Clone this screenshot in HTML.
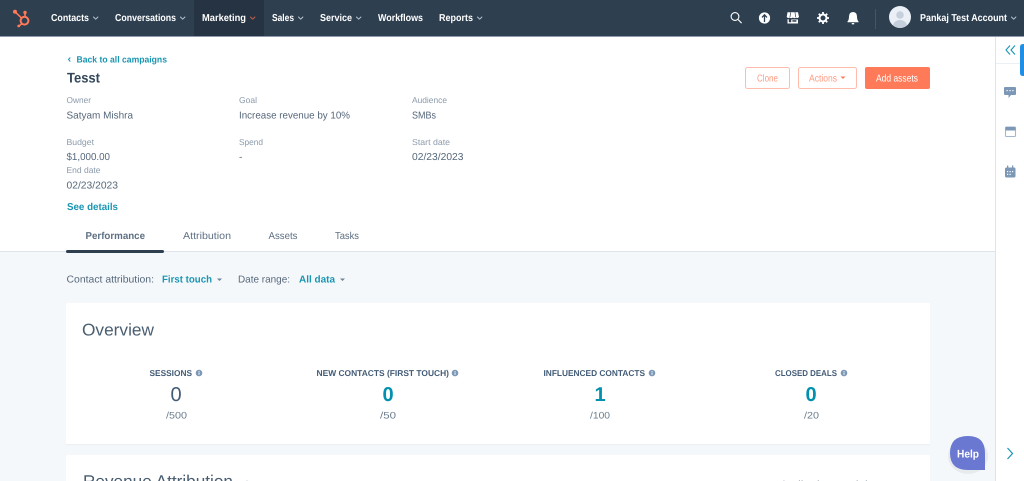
<!DOCTYPE html>
<html lang="en"><head><meta charset="utf-8"><title>Campaign</title>
<style>
html,body{margin:0;padding:0;width:1024px;height:481px;overflow:hidden;background:#fff}
svg{display:block;font-family:"Liberation Sans",sans-serif}
text{text-rendering:geometricPrecision}
.t{filter:blur(.35px)}
.nav{font-size:10px;font-weight:700;fill:#fff}
.lab{font-size:8.5px;fill:#8b9aab}
.val{font-size:10px;fill:#55677a}
.lnk{font-size:10px;font-weight:700;fill:#1a96b2}
.tab{font-size:10px;fill:#5d6f82}
.met{font-size:8.5px;font-weight:700;fill:#425b76}
.big{font-size:20px;text-anchor:middle}
.sub{font-size:9.5px;fill:#6b7c8d}
.chev{fill:none;stroke:#b9c4d0;stroke-width:1;stroke-linecap:round;stroke-linejoin:round}
</style></head><body>
<svg width="1024" height="481" viewBox="0 0 1024 481" xmlns="http://www.w3.org/2000/svg">
<rect width="1024" height="481" fill="#fff"/>
<!-- page bg -->
<rect x="0" y="252" width="995" height="229" fill="#f5f8fa"/>
<rect x="0" y="251" width="995" height="1" fill="#dfe3eb"/>
<!-- top nav -->
<rect width="1024" height="36" fill="#2e3f50"/>
<rect y="36" width="1024" height="1" fill="#8f9baa"/>
<rect x="194" width="70" height="36" fill="#253342"/>
<!-- logo -->
<g fill="none" stroke="#ff7a59" stroke-linecap="round">
<circle cx="24.5" cy="20.7" r="3.9" stroke-width="2"/>
<path d="M15.5 12.2 L21.3 17.8" stroke-width="1.5"/>
<path d="M25 13 V16.5" stroke-width="1.6"/>
<path d="M21.5 24 L19 26" stroke-width="1.5"/>
</g>
<g fill="#ff7a59"><circle cx="15" cy="11.8" r="2"/><circle cx="25" cy="12.5" r="1.7"/><circle cx="18.7" cy="26" r="1.4"/></g>
<g class="t">
<text class="nav" x="51" y="21" textLength="38" lengthAdjust="spacingAndGlyphs">Contacts</text>
<text class="nav" x="115" y="21" textLength="61" lengthAdjust="spacingAndGlyphs">Conversations</text>
<text class="nav" x="202" y="21" textLength="44" lengthAdjust="spacingAndGlyphs">Marketing</text>
<text class="nav" x="272" y="21" textLength="22" lengthAdjust="spacingAndGlyphs">Sales</text>
<text class="nav" x="320" y="21" textLength="32" lengthAdjust="spacingAndGlyphs">Service</text>
<text class="nav" x="378" y="21" textLength="45" lengthAdjust="spacingAndGlyphs">Workflows</text>
<text class="nav" x="439" y="21" textLength="34" lengthAdjust="spacingAndGlyphs">Reports</text>
<text class="nav" x="920" y="21" textLength="87" lengthAdjust="spacingAndGlyphs">Pankaj Test Account</text>
</g>
<g class="chev">
<path d="M93.5 17 l2.2 2.2 l2.2 -2.2"/><path d="M180.5 17 l2.2 2.2 l2.2 -2.2"/>
<path d="M250.5 17 l2.2 2.2 l2.2 -2.2" stroke="#c9604a" style="stroke:#c9604a"/>
<path d="M298.5 17 l2.2 2.2 l2.2 -2.2"/><path d="M356.5 17 l2.2 2.2 l2.2 -2.2"/>
<path d="M477.5 17 l2.2 2.2 l2.2 -2.2"/><path d="M1011.5 17 l2.2 2.2 l2.2 -2.2"/>
</g>
<!-- search -->
<g fill="none" stroke="#fff" stroke-width="1.1" stroke-linecap="round"><circle cx="735" cy="16.5" r="3.9"/><path d="M738 19.5 L741.3 22.8"/></g>
<!-- upgrade -->
<circle cx="764.5" cy="18" r="5.6" fill="#fff"/>
<path d="M764.5 22 V15.2 M762 17.4 L764.5 14.8 L767 17.4" fill="none" stroke="#2e3f50" stroke-width="1.3"/>
<!-- marketplace -->
<g fill="#fff"><path d="M787.5 12.3 H798 L799 17 Q797.5 18.8 796 17.5 Q794.5 18.8 793 17.5 Q791.3 18.8 789.8 17.5 Q788 18.8 786.7 17 Z"/>
<path d="M787.5 19.2 H788.8 V22.2 H791.2 V19.5 H798 V23.5 H787.5 Z"/></g>
<path d="M790.6 12.3 L790 17 M795 12.3 L795.6 17" stroke="#2e3f50" stroke-width=".7"/>
<rect x="792.4" y="20.2" width="4" height="1.5" fill="#2e3f50"/>
<!-- gear -->
<g fill="none" stroke="#fff"><circle cx="823" cy="18" r="3.5" stroke-width="2"/>
<path d="M823 12 V14 M823 22 V24 M817 18 H819 M827 18 H829 M818.8 13.8 L820.2 15.2 M825.8 20.8 L827.2 22.2 M818.8 22.2 L820.2 20.8 M825.8 15.2 L827.2 13.8" stroke-width="1.8"/></g>
<!-- bell -->
<path d="M853 12 Q857 12.3 857 16.5 Q857 20 858.5 21.5 V22.3 H847.5 V21.5 Q849 20 849 16.5 Q849 12.3 853 12 Z" fill="#fff"/>
<rect x="851.7" y="23" width="2.6" height="1.4" rx=".7" fill="#fff"/>
<rect x="875" y="9" width="1" height="20" fill="#43566a"/>
<!-- avatar -->
<clipPath id="av"><circle cx="900" cy="17" r="11"/></clipPath>
<circle cx="900" cy="17" r="11" fill="#eaf0f6"/>
<g clip-path="url(#av)" fill="#c5d0dc"><circle cx="900" cy="15" r="3.8"/><ellipse cx="900" cy="26" rx="7" ry="6"/></g>

<!-- header content -->
<g class="t">
<path d="M70.3 57.5 L68.5 59.5 L70.3 61.5" fill="none" stroke="#1a96b2" stroke-width="1"/>
<text class="lnk" x="76.5" y="62.5" style="font-size:9px" textLength="90.5" lengthAdjust="spacingAndGlyphs">Back to all campaigns</text>
<text x="67" y="82.5" font-size="14" font-weight="700" fill="#33475b" textLength="33" lengthAdjust="spacingAndGlyphs">Tesst</text>

<text class="lab" x="66.5" y="103" textLength="24.5" lengthAdjust="spacingAndGlyphs">Owner</text>
<text class="lab" x="239" y="103" textLength="18" lengthAdjust="spacingAndGlyphs">Goal</text>
<text class="lab" x="412" y="103" textLength="35" lengthAdjust="spacingAndGlyphs">Audience</text>
<text class="val" x="66.5" y="118.5" textLength="66.5" lengthAdjust="spacingAndGlyphs">Satyam Mishra</text>
<text class="val" x="239" y="118.5" textLength="111" lengthAdjust="spacingAndGlyphs">Increase revenue by 10%</text>
<text class="val" x="412" y="118.5" textLength="24" lengthAdjust="spacingAndGlyphs">SMBs</text>

<text class="lab" x="66.5" y="145" textLength="27.5" lengthAdjust="spacingAndGlyphs">Budget</text>
<text class="lab" x="239" y="145" textLength="24" lengthAdjust="spacingAndGlyphs">Spend</text>
<text class="lab" x="412" y="145" textLength="38" lengthAdjust="spacingAndGlyphs">Start date</text>
<text class="val" x="66.5" y="160" textLength="43.5" lengthAdjust="spacingAndGlyphs">$1,000.00</text>
<text class="val" x="239" y="160">-</text>
<text class="val" x="412" y="160" textLength="51.5" lengthAdjust="spacingAndGlyphs">02/23/2023</text>
<text class="lab" x="66.5" y="173" textLength="34" lengthAdjust="spacingAndGlyphs">End date</text>
<text class="val" x="66.5" y="188.5" textLength="51.5" lengthAdjust="spacingAndGlyphs">02/23/2023</text>
<text class="lnk" x="67" y="210" textLength="51" lengthAdjust="spacingAndGlyphs">See details</text>

<!-- buttons -->
<rect x="745.5" y="67.5" width="44" height="21" rx="2" fill="#fff" stroke="#ffbcac"/>
<rect x="798.5" y="67.5" width="58" height="21" rx="2" fill="#fff" stroke="#ffbcac"/>
<rect x="865" y="67" width="65" height="22" rx="2" fill="#ff7a59"/>
<text x="757" y="81.5" font-size="10" fill="#ff9a80" textLength="21" lengthAdjust="spacingAndGlyphs">Clone</text>
<text x="809" y="81.5" font-size="10" fill="#ff9a80" textLength="28" lengthAdjust="spacingAndGlyphs">Actions</text>
<path d="M840.5 76.5 H845.5 L843 79 Z" fill="#ff7a59"/>
<text x="876" y="81.5" font-size="10" fill="#fff" textLength="42" lengthAdjust="spacingAndGlyphs">Add assets</text>

<!-- tabs -->
<text class="tab" x="85.5" y="239" font-weight="700" textLength="59.5" lengthAdjust="spacingAndGlyphs">Performance</text>
<text class="tab" x="183" y="239" textLength="48" lengthAdjust="spacingAndGlyphs">Attribution</text>
<text class="tab" x="268.5" y="239" textLength="29" lengthAdjust="spacingAndGlyphs">Assets</text>
<text class="tab" x="335" y="239" textLength="24" lengthAdjust="spacingAndGlyphs">Tasks</text>
</g>
<rect x="66" y="250" width="98" height="3" rx="1.5" fill="#2e3f50"/>

<!-- filters -->
<g class="t">
<text class="val" x="66.5" y="282.5" textLength="87.5" lengthAdjust="spacingAndGlyphs">Contact attribution:</text>
<text class="lnk" x="162" y="282.5" textLength="50" lengthAdjust="spacingAndGlyphs">First touch</text>
<path d="M217 278.5 H222 L219.5 281 Z" fill="#6b8299"/>
<text class="val" x="238" y="282.5" textLength="52" lengthAdjust="spacingAndGlyphs">Date range:</text>
<text class="lnk" x="299" y="282.5" textLength="36" lengthAdjust="spacingAndGlyphs">All data</text>
<path d="M340 278.5 H345 L342.5 281 Z" fill="#6b8299"/>
</g>

<!-- cards -->
<rect x="66" y="303" width="864" height="141" rx="2" fill="#fff"/>
<rect x="66" y="444" width="864" height="1.5" fill="#eef2f6"/>
<rect x="66" y="455" width="864" height="30" rx="2" fill="#fff"/>
<g class="t">
<text x="82" y="335.5" font-size="17" fill="#4a5e72" textLength="72" lengthAdjust="spacingAndGlyphs">Overview</text>

<text class="met" x="149.5" y="376" textLength="42.5" lengthAdjust="spacingAndGlyphs">SESSIONS</text>
<text class="met" x="316.5" y="376" textLength="132.5" lengthAdjust="spacingAndGlyphs">NEW CONTACTS (FIRST TOUCH)</text>
<text class="met" x="543.5" y="376" textLength="101.5" lengthAdjust="spacingAndGlyphs">INFLUENCED CONTACTS</text>
<text class="met" x="775" y="376" textLength="62" lengthAdjust="spacingAndGlyphs">CLOSED DEALS</text>

<text class="big" x="176" y="401" fill="#425b76">0</text>
<text class="big" x="388" y="401" fill="#0091ae" font-weight="700">0</text>
<text class="big" x="600" y="401" fill="#0091ae" font-weight="700">1</text>
<text class="big" x="811" y="401" fill="#0091ae" font-weight="700">0</text>

<text class="sub" x="166" y="418.5" textLength="21" lengthAdjust="spacingAndGlyphs">/500</text>
<text class="sub" x="380" y="418.5" textLength="16" lengthAdjust="spacingAndGlyphs">/50</text>
<text class="sub" x="590" y="418.5" textLength="20" lengthAdjust="spacingAndGlyphs">/100</text>
<text class="sub" x="804" y="418.5" textLength="15" lengthAdjust="spacingAndGlyphs">/20</text>

<text x="83" y="487" font-size="17" fill="#4a5e72" textLength="150" lengthAdjust="spacingAndGlyphs">Revenue Attribution</text>
<text x="780" y="487" font-size="9" fill="#6b7c8d" textLength="100" lengthAdjust="spacingAndGlyphs">Attribution model: ▾</text>
</g>
<g fill="#7c98b6"><circle cx="199" cy="373" r="3.3"/><circle cx="455" cy="373" r="3.3"/><circle cx="652" cy="373" r="3.3"/><circle cx="844" cy="373" r="3.3"/><circle cx="247" cy="484" r="3.3"/></g>
<g fill="#fff"><rect x="198.6" y="372.4" width=".9" height="2.4"/><rect x="198.6" y="371" width=".9" height=".9"/><rect x="454.6" y="372.4" width=".9" height="2.4"/><rect x="454.6" y="371" width=".9" height=".9"/><rect x="651.6" y="372.4" width=".9" height="2.4"/><rect x="651.6" y="371" width=".9" height=".9"/><rect x="843.6" y="372.4" width=".9" height="2.4"/><rect x="843.6" y="371" width=".9" height=".9"/></g>

<!-- right sidebar -->
<rect x="995" y="37" width="1" height="444" fill="#dfe3eb"/>
<rect x="996" y="63" width="29" height="1" fill="#eaf0f6"/>
<path d="M1010 45.5 L1006 50 L1010 54.5 M1015 45.5 L1011 50 L1015 54.5" fill="none" stroke="#1a96b2" stroke-width="1.1"/>
<path d="M1024 44 H1023 Q1020 44 1020 47 V73 Q1020 76 1023 76 H1024 Z" fill="#1f8fe5"/>
<!-- chat -->
<path d="M1005 87 H1015 Q1016 87 1016 88 V94 Q1016 95 1015 95 H1011 L1008.5 98 V95 H1005 Q1004 95 1004 94 V88 Q1004 87 1005 87 Z" fill="#7c98b6"/>
<g fill="#fff"><rect x="1006.5" y="90" width="1.2" height="1.2"/><rect x="1009.4" y="90" width="1.2" height="1.2"/><rect x="1012.3" y="90" width="1.2" height="1.2"/></g>
<!-- window -->
<rect x="1005.5" y="127" width="10" height="9.5" rx="1" fill="none" stroke="#a3b6ca" stroke-width="1.1"/>
<rect x="1005.5" y="127" width="10" height="3.5" rx=".8" fill="#7c98b6"/>
<!-- calendar -->
<rect x="1005" y="167.5" width="10.5" height="10" rx="1.5" fill="#7c98b6"/>
<rect x="1007" y="165.5" width="1.3" height="3" fill="#7c98b6"/><rect x="1012" y="165.5" width="1.3" height="3" fill="#7c98b6"/>
<g fill="#fff"><rect x="1007" y="171" width="1.2" height="1.2"/><rect x="1009.5" y="171" width="1.2" height="1.2"/><rect x="1012" y="171" width="1.2" height="1.2"/><rect x="1007" y="173.8" width="1.2" height="1.2"/><rect x="1009.5" y="173.8" width="1.2" height="1.2"/></g>
<path d="M1007.5 448 L1012.5 453.5 L1007.5 459" fill="none" stroke="#1a96b2" stroke-width="1.2"/>

<!-- help -->
<ellipse cx="968" cy="456" rx="20" ry="18" fill="#33475b" opacity=".07"/>
<path d="M968 436 Q985 436 985 453 V470 H968 Q950 470 950 453 Q950 436 968 436 Z" fill="#6a78d1"/>
<text x="957" y="457.5" font-size="11" font-weight="700" fill="#fff" textLength="22" lengthAdjust="spacingAndGlyphs" class="t">Help</text>
</svg>
</body></html>
